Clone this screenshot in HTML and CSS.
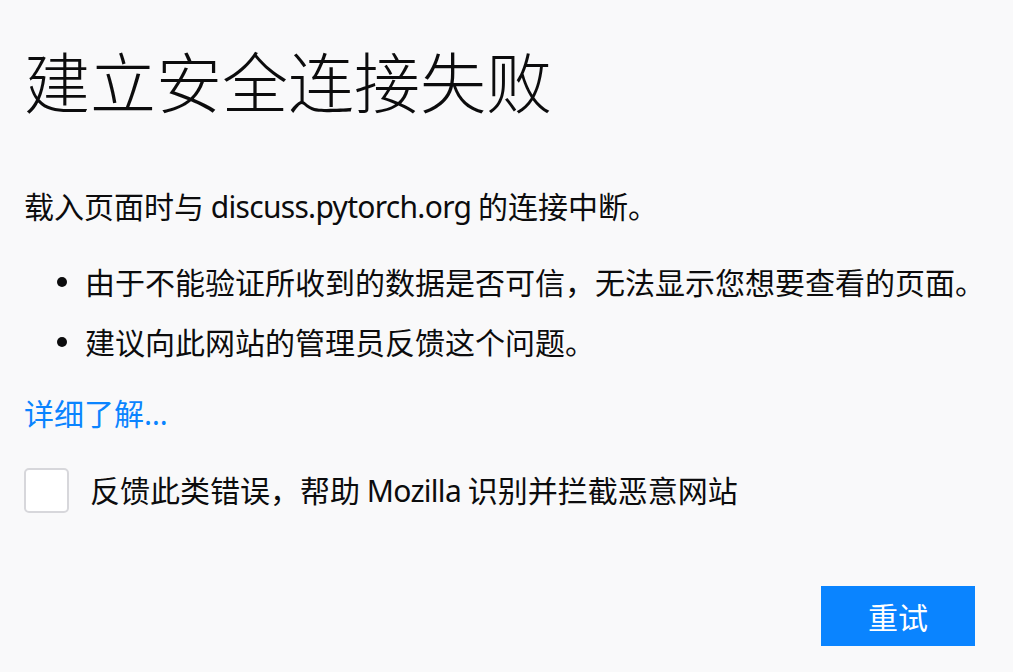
FILE: index.html
```html
<!DOCTYPE html>
<html lang="zh-CN">
<head>
<meta charset="utf-8">
<title>建立安全连接失败</title>
<link rel="stylesheet" href="styles.css">
</head>
<body>
<main class="page">
  <h1 class="title">建立安全连接失败</h1>
  <p class="desc">载入页面时与 <span class="en">discuss.pytorch.org</span> 的连接中断。</p>
  <ul class="list">
    <li class="item">由于不能验证所收到的数据是否可信，无法显示您想要查看的页面。</li>
    <li class="item">建议向此网站的管理员反馈这个问题。</li>
  </ul>
  <a class="learn" href="#">详细了解<span class="dots">…</span></a>
  <label class="report">
    <span class="box"></span>
    <span class="report-text">反馈此类错误，帮助 <span class="en">Mozilla</span> 识别并拦截恶意网站</span>
  </label>
  <div class="actions">
    <button class="retry" type="button">重试</button>
  </div>
</main>
</body>
</html>
```

FILE: styles.css
```css
html, body {
  margin: 0;
  padding: 0;
  background: #f9f9fa;
}
body {
  width: 1013px;
  height: 672px;
  overflow: hidden;
  color: #0c0c0d;
  font-family: "Noto Sans CJK SC", "Noto Sans", sans-serif;
  font-size: 30px;
}
.page {
  padding: 0 0 0 24px;
  display: flex;
  flex-direction: column;
}
.en {
  font-family: "Noto Sans", "Noto Sans CJK SC", sans-serif;
  letter-spacing: -0.7px;
}
.dots {
  font-family: "Noto Sans", sans-serif;
  letter-spacing: 0;
}
.title {
  margin: 31px 0 0 0;
  font-size: 66px;
  font-weight: 200;
  line-height: 96px;
  letter-spacing: 0;
}
.desc {
  margin: 56px 0 0 0;
  line-height: 45px;
}
.list {
  list-style: none;
  margin: 30px 0 0 0;
  padding: 0;
  display: flex;
  flex-direction: column;
  gap: 15px;
}
.item {
  display: flex;
  align-items: center;
  line-height: 45px;
  white-space: nowrap;
}
.item::before {
  content: "";
  width: 10px;
  height: 10px;
  border-radius: 50%;
  background: #0c0c0d;
  margin: 0 18px 0 33px;
  flex: none;
}
.learn {
  margin-top: 26px;
  color: #0a84ff;
  text-decoration: none;
  line-height: 45px;
  align-self: flex-start;
}
.report {
  margin-top: 31px;
  display: flex;
  align-items: center;
  gap: 21px;
}
.box {
  width: 41px;
  height: 41px;
  border: 2px solid #d7d7db;
  border-radius: 5px;
  background: #ffffff;
  flex: none;
}
.report-text {
  line-height: 45px;
}
.actions {
  display: flex;
  justify-content: flex-end;
  margin-top: 73px;
  padding-right: 38px;
}
.retry {
  width: 154px;
  height: 60px;
  border: none;
  border-radius: 0;
  background: #0a84ff;
  color: #ffffff;
  font-family: "Noto Sans CJK SC", sans-serif;
  font-size: 30px;
  padding: 0;
}
```
